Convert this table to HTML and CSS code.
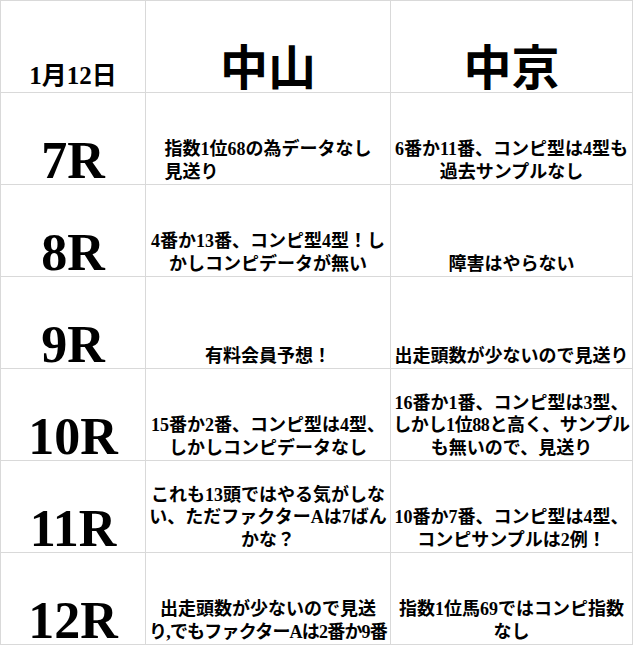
FILE: index.html
```html
<!DOCTYPE html>
<html lang="ja">
<head>
<meta charset="utf-8">
<title>1月12日 予想</title>
<link rel="stylesheet" href="styles.css">
</head>
<body>
<div class="sheet">
  <div class="cell head date"><div class="txt">1月12日</div></div>
  <div class="cell head venue"><div class="txt">中山</div></div>
  <div class="cell head venue"><div class="txt">中京</div></div>

  <div class="cell race"><div class="txt">7R</div></div>
  <div class="cell note"><div class="txt left">指数1位68の為データなし<br>見送り</div></div>
  <div class="cell note"><div class="txt">6番か11番、コンピ型は4型も<br>過去サンプルなし</div></div>

  <div class="cell race"><div class="txt">8R</div></div>
  <div class="cell note"><div class="txt">4番か13番、コンピ型4型！し<br>かしコンピデータが無い</div></div>
  <div class="cell note"><div class="txt">障害はやらない</div></div>

  <div class="cell race"><div class="txt">9R</div></div>
  <div class="cell note"><div class="txt">有料会員予想！</div></div>
  <div class="cell note"><div class="txt">出走頭数が少ないので見送り</div></div>

  <div class="cell race"><div class="txt">10R</div></div>
  <div class="cell note"><div class="txt">15番か2番、コンピ型は4型、<br>しかしコンピデータなし</div></div>
  <div class="cell note"><div class="txt">16番か1番、コンピ型は3型、<br><span class="tight">しかし1位88と高く、サンプル</span><br>も無いので、見送り</div></div>

  <div class="cell race"><div class="txt">11R</div></div>
  <div class="cell note"><div class="txt">これも13頭ではやる気がしな<br>い、ただファクターAは7ばん<br>かな？</div></div>
  <div class="cell note"><div class="txt">10番か7番、コンピ型は4型、<br>コンピサンプルは2例！</div></div>

  <div class="cell race"><div class="txt">12R</div></div>
  <div class="cell note"><div class="txt">出走頭数が少ないので見送<br><span class="tighter">り,でもファクターAは2番か9番</span></div></div>
  <div class="cell note"><div class="txt">指数1位馬69ではコンピ指数<br>なし</div></div>
</div>
</body>
</html>
```
FILE: styles.css
```css
html, body {
  margin: 0;
  padding: 0;
  background: #ffffff;
}

body {
  font-family: "Liberation Serif", "Noto Sans CJK JP", serif;
  color: #000000;
  font-weight: 700;
}

.sheet {
  display: grid;
  grid-template-columns: 144px 244px 241px;
  grid-template-rows: repeat(7, 91px);
  gap: 1px;
  padding: 1px;
  background: #d9d9d9;
  width: max-content;
}

.cell {
  background: #ffffff;
  display: flex;
  align-items: flex-end;
  justify-content: center;
  text-align: center;
  white-space: nowrap;
}

.date {
  font-size: 25px;
  line-height: 28px;
}

.date .txt {
  margin-bottom: 2px;
}

.venue {
  font-size: 48px;
  line-height: 52px;
}

.venue .txt {
  margin-bottom: -3px;
}

.race {
  font-size: 52px;
  line-height: 46px;
}

.note {
  font-size: 18px;
  line-height: 22.5px;
}

.note .txt {
  margin-bottom: 1px;
}

.left {
  text-align: left;
}

.tight {
  letter-spacing: -0.4px;
}

.tighter {
  letter-spacing: -0.8px;
}
```
